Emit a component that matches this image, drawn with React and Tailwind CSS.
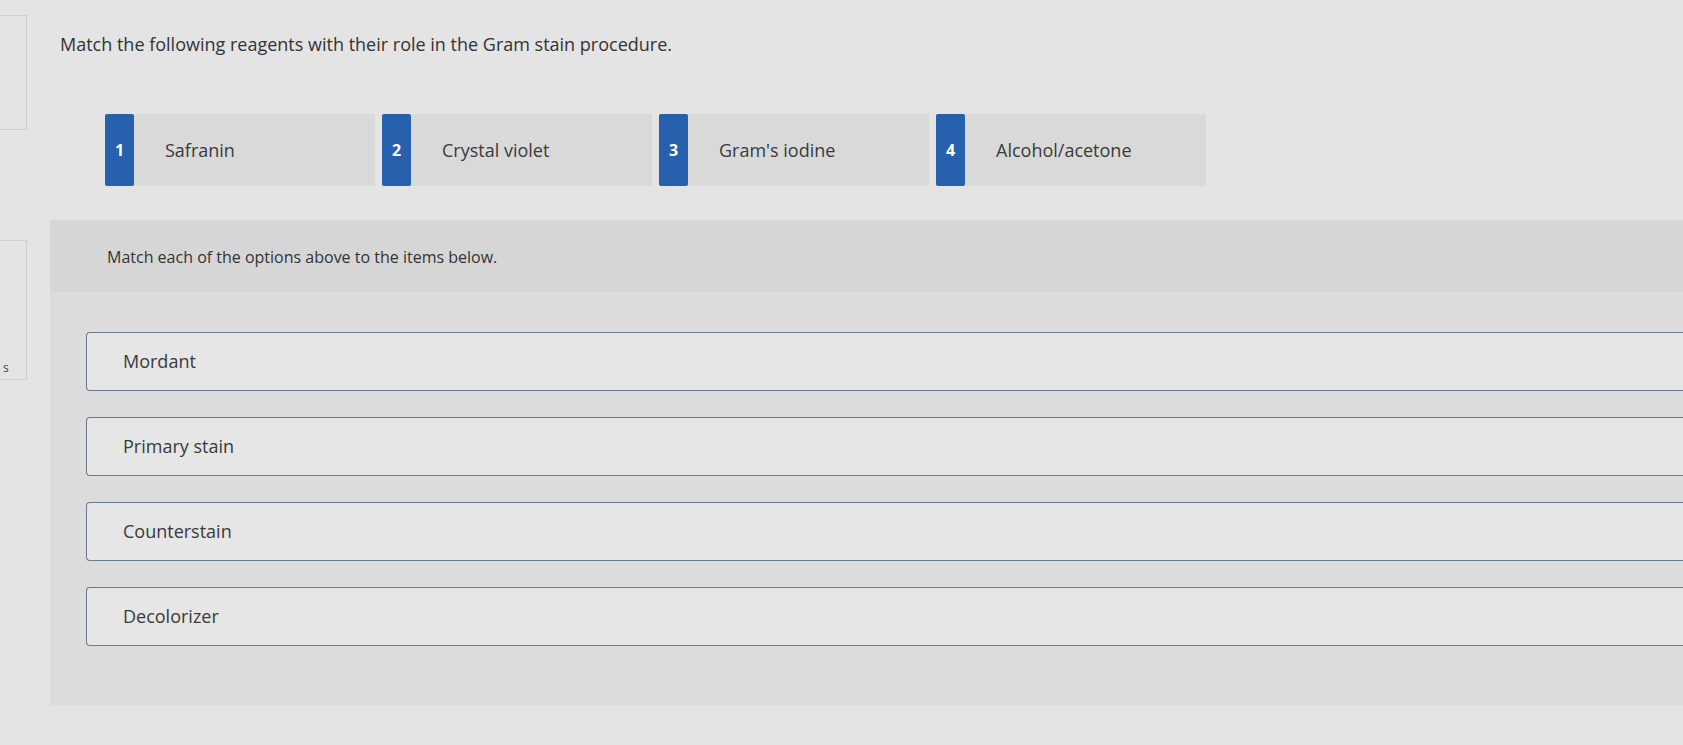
import React from 'react'

const OPCOES = [
  { n: 1, label: 'Safranin' },
  { n: 2, label: 'Crystal violet' },
  { n: 3, label: "Gram's iodine" },
  { n: 4, label: 'Alcohol/acetone' },
]

const ITENS = ['Mordant', 'Primary stain', 'Counterstain', 'Decolorizer']

function Opcao({ n, label }) {
  return (
    <div className="flex items-center h-[72px] w-[270px] bg-[#d9d9d9]">
      <div className="flex items-center justify-center w-[29px] h-full bg-[#2760ad] rounded-[2px] text-white text-[16px] font-bold">
        {n}
      </div>
      <span className="ml-[31px] text-[18px] text-[#3a3a3a]">{label}</span>
    </div>
  )
}

export default function App() {
  return (
    <div
      className="w-[1683px] h-[745px] bg-[#e4e4e4] flex overflow-hidden"
      style={{ fontFamily: '"Open Sans", Lato, sans-serif' }}
    >
      <aside className="w-[27px] shrink-0 flex flex-col">
        <div className="mt-[15px] h-[115px] border border-l-0 border-[#cfcfcf]" />
        <div className="mt-[110px] h-[140px] border border-l-0 border-[#cfcfcf] flex items-end">
          <span className="ml-[3px] mb-[2px] text-[12px] text-[#444]">s</span>
        </div>
      </aside>

      <main className="flex-1 flex flex-col">
        <p className="ml-[33px] mt-[31px] text-[18px] text-[#333]">
          Match the following reagents with their role in the Gram stain procedure.
        </p>

        <div className="ml-[78px] mt-[56px] flex gap-[7px]">
          {OPCOES.map((o) => (
            <Opcao key={o.n} {...o} />
          ))}
        </div>

        <section className="ml-[23px] mt-[34px] h-[485px] bg-[#dcdcdc] flex flex-col">
          <div className="h-[72px] bg-[#d6d6d6] pl-[57px] pt-[25px] text-[16px] text-[#333]">
            Match each of the options above to the items below.
          </div>
          <div className="pl-[36px] pt-[40px] flex flex-col gap-[26px]">
            {ITENS.map((item) => (
              <div
                key={item}
                className="h-[59px] bg-[#e6e6e6] border-[1.5px] border-r-0 border-[#6c7a8e] rounded-l-[4px] flex items-center pl-[36px] text-[18px] text-[#3a3a3a]"
              >
                {item}
              </div>
            ))}
          </div>
        </section>
      </main>
    </div>
  )
}
